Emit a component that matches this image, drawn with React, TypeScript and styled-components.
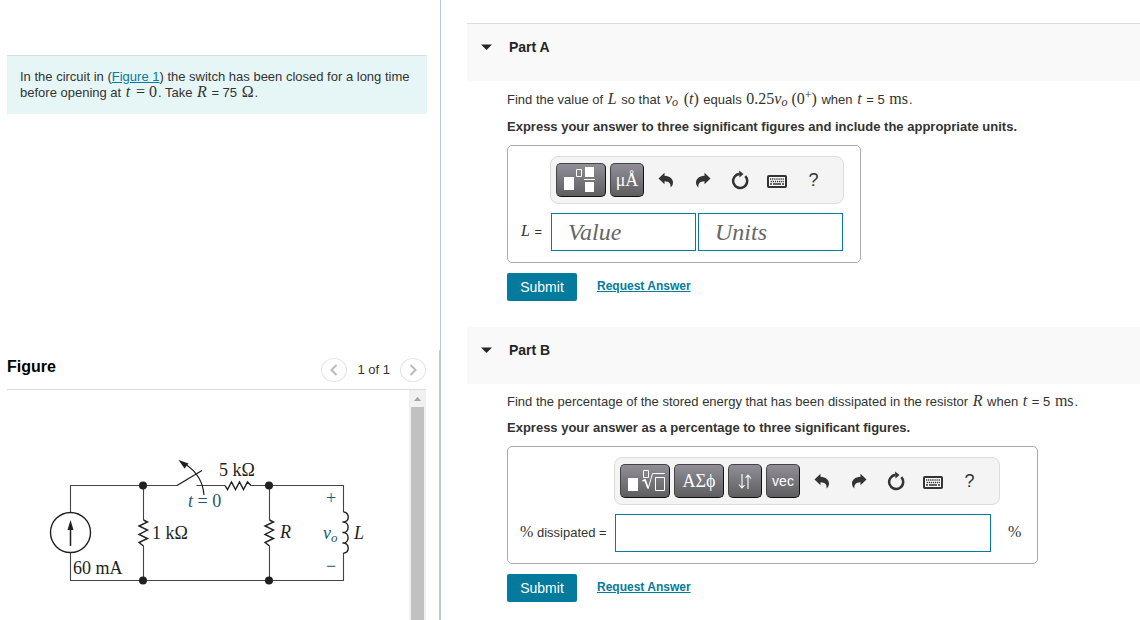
import React from "react";
import styled, { createGlobalStyle, css } from "styled-components";

const sans = '"Liberation Sans", Arial, sans-serif';
const serif = '"Liberation Serif", "Times New Roman", serif';
const teal = "#047a9c";

const GlobalStyle = createGlobalStyle`
  *, *::before, *::after { box-sizing: border-box; }
  body {
    margin: 0;
    background: #fff;
    color: #333;
    font: 13px/16px ${sans};
  }
  button, input { font-family: inherit; }
  h2, h3, p { margin: 0; }
`;

const Page = styled.div`
  display: flex;
  align-items: flex-start;
`;

const Sidebar = styled.aside`
  flex: 0 0 441px;
  height: 100vh;
  display: flex;
  flex-direction: column;
`;

const ProblemPane = styled.section`
  flex: 0 0 350px;
  padding: 55px 13px 0 7px;
  border-right: 1px solid #b9cbdf;
`;

const Intro = styled.div`
  padding: 13px 12px 13px 13px;
  border-top: 1px solid #ddd;
  background: #e6f6f7;
`;

const Link = styled.a`
  color: ${teal};
  text-decoration: underline;
`;

const FigurePane = styled.section`
  flex: 1;
  min-height: 0;
  display: flex;
  flex-direction: column;
  padding: 0 13px 0 7px;
  border-right: 2px solid #b9cbdf;
`;

const FigureHeader = styled.header`
  flex: none;
  height: 40px;
  display: flex;
  align-items: center;
  justify-content: space-between;
  border-bottom: 1px solid #ddd;
`;

const FigureTitle = styled.h2`
  padding-bottom: 6px;
  color: #000;
  font-size: 16px;
  line-height: 20px;
`;

const Pager = styled.nav`
  display: flex;
  align-items: center;
  gap: 10px;
`;

const PagerButton = styled.button`
  display: grid;
  place-items: center;
  width: 26px;
  height: 24px;
  padding: 0;
  border: 1px solid #e4e4e4;
  border-radius: 50%;
  background: #fff;
`;

const PagerText = styled.span`
  padding-top: 1px;
`;

const FigureBody = styled.div`
  flex: 1;
  min-height: 0;
  display: flex;
  overflow: hidden;
`;

const Circuit = styled.svg`
  flex: none;
  display: block;
  text {
    font-family: ${serif};
    font-size: 18px;
    fill: #231f20;
  }
  .it { font-style: italic; }
  .blue { fill: #1c5878; }
  .sub { font-size: 13px; }
`;

const ScrollTrack = styled.div`
  width: 17px;
  margin-left: auto;
  display: flex;
  flex-direction: column;
  align-items: center;
  background: #f1f1f1;
`;

const ScrollArrow = styled.svg`
  flex: none;
  width: 17px;
  height: 17px;
`;

const ScrollThumb = styled.div`
  flex: 1;
  width: 13px;
  background: #c1c1c1;
`;

const Main = styled.main`
  flex: 1;
  min-width: 0;
  padding: 23px 0 0 26px;
`;

const Part = styled.section`
  & + & { margin-top: 26px; }
`;

const PartHeader = styled.header<{ $ruled?: boolean }>`
  display: flex;
  align-items: flex-start;
  gap: 17px;
  padding: 15px 14px 26px;
  background: #f9f9f9;
  ${(p) => p.$ruled && css`border-top: 1px solid #ddd;`}
`;

const Caret = styled.svg`
  width: 11px;
  height: 16px;
`;

const PartTitle = styled.h3`
  color: #252525;
  font-size: 14px;
  line-height: 16px;
`;

const PartBody = styled.div`
  display: flex;
  flex-direction: column;
  align-items: flex-start;
  gap: 10px;
  padding: 10px 20px 0 40px;
`;

const Question = styled.p<{ $tall?: boolean }>`
  line-height: ${(p) => (p.$tall ? 18 : 16)}px;
`;

const Instruction = styled.p`
  font-weight: bold;
`;

const Math = styled.span<{ $upright?: boolean; $tight?: boolean }>`
  margin: 0 ${(p) => (p.$tight ? 0 : 1)}px;
  font-family: ${serif};
  font-size: 16px;
  line-height: 1px;
  font-style: ${(p) => (p.$upright ? "normal" : "italic")};
  sub, sup { font-size: 12px; line-height: 1px; }
  sub { vertical-align: -2px; }
  sup { vertical-align: 5px; }
`;

const AnswerBox = styled.div<{ $label: number }>`
  display: grid;
  grid-template-columns: ${(p) => p.$label}px auto auto;
  row-gap: 9px;
  align-items: center;
  padding: 10px 16px 11px 12px;
  border: 1px solid #aaa;
  border-radius: 5px;
`;

const Toolbar = styled.div`
  grid-column: 2;
  display: flex;
  align-items: center;
  gap: 4px;
  height: 48px;
  padding: 0 11px 0 5px;
  border: 1px solid #dcdcdc;
  border-radius: 8px;
  background: #f4f4f4;
`;

const IconGroup = styled.div`
  display: flex;
  margin-left: -1px;
`;

const DarkButton = styled.button<{ $wide?: boolean; $serif?: boolean }>`
  display: grid;
  place-items: center;
  width: ${(p) => (p.$wide ? 50 : 34)}px;
  height: 34px;
  padding: 0;
  border: 1px solid #111;
  border-top-color: #444;
  border-left-color: #444;
  border-radius: 5px;
  background: linear-gradient(#918e98, #5e5e60);
  color: #fff;
  font-family: ${(p) => (p.$serif ? serif : sans)};
  font-size: ${(p) => (p.$serif ? 18 : 14)}px;
  line-height: 20px;
`;

const IconButton = styled.button`
  display: grid;
  place-items: center;
  width: 37px;
  height: 34px;
  padding: 0;
  border: 0;
  background: none;
  color: #333;
  font-size: 18px;
  line-height: 20px;
`;

const FieldLabel = styled.label`
  grid-column: 1;
  white-space: nowrap;
`;

const Fields = styled.div`
  grid-column: 2;
  display: flex;
  gap: 2px;
  padding-left: 1px;
`;

const Field = styled.input<{ $long?: boolean }>`
  width: ${(p) => (p.$long ? 376 : 145)}px;
  height: 38px;
  padding: 0 16px;
  border: 1px solid ${teal};
  border-radius: 0;
  background: #fff;
  font: 24px ${serif};
  &::placeholder { color: #666; font-style: italic; opacity: 1; }
`;

const Unit = styled.span`
  padding-left: 8px;
`;

const Actions = styled.div`
  display: flex;
  align-items: center;
  gap: 20px;
`;

const Submit = styled.button`
  width: 70px;
  height: 28px;
  padding: 0;
  border: 0;
  border-radius: 2px;
  background: ${teal};
  color: #fff;
  font-size: 14px;
  line-height: 28px;
`;

const RequestLink = styled(Link)`
  padding-bottom: 2px;
  font-size: 12px;
  font-weight: bold;
`;

const Chevron = ({ d }: { d: string }) => (
  <svg width="12" height="14" viewBox="0 0 12 14" fill="none" stroke="#bbb" strokeWidth="2">
    <path d={d} />
  </svg>
);

const arrowPath =
  "M2.5 8.5L8.5 2.8V5.7C14 6 17 9 17 12.3C17 14.800 16 16.500 14.500 17.500C15.200 13.800 13.200 11.400 8.500 11.300V14.200Z";

const HistoryTools = () => (
  <IconGroup>
    <IconButton aria-label="Undo">
      <svg width="20" height="20" viewBox="0 0 20 20" fill="#333"><path d={arrowPath} /></svg>
    </IconButton>
    <IconButton aria-label="Redo">
      <svg width="20" height="20" viewBox="0 0 20 20" fill="#333">
        <path transform="matrix(-1 0 0 1 20 0)" d={arrowPath} />
      </svg>
    </IconButton>
    <IconButton aria-label="Reset">
      <svg width="20" height="20" viewBox="0 0 20 20">
        <path d="M15.300 6.200A7 7 0 1 1 9.500 4" fill="none" stroke="#333" strokeWidth="2.500" />
        <path d="M9 0.500L13.500 4L9.500 7.500Z" fill="#333" />
      </svg>
    </IconButton>
    <IconButton aria-label="Keyboard shortcuts">
      <svg width="20" height="20" viewBox="0 0 20 20">
        <rect x="1" y="6" width="18" height="11" rx="0.800" fill="#fff" stroke="#333" strokeWidth="2" />
        <path d="M3 9H17" stroke="#333" strokeWidth="1.600" strokeDasharray="1.300 0.800" />
        <path d="M3.600 11.500H17" stroke="#333" strokeWidth="1.600" strokeDasharray="1.300 0.800" />
        <path d="M3 14H5M6 14H14M15 14H17" stroke="#333" strokeWidth="1.300" />
      </svg>
    </IconButton>
    <IconButton aria-label="Help">?</IconButton>
  </IconGroup>
);

const CircuitDiagram = () => (
  <Circuit width="402" height="230" viewBox="7 390 402 230" role="img" aria-label="Circuit with current source, switch, resistors and inductor">
    <g fill="none" stroke="#444" strokeWidth="1.100">
      <path d="M70.500 512.500V485.500H177" />
      <path d="M70.500 553V580.500H343.500V553" />
      <path d="M196.500 485.500H225M251 485.500H343.500V512" />
      <path d="M143.500 485.500V520M143.500 546V580.500M269.500 485.500V520M269.500 546V580.500" />
    </g>
    <g fill="none" stroke="#231f20" strokeWidth="1.400">
      <path d="M177 485.500L202 470.500" />
      <path d="M225 485.500l2.500 4 4 -7.500 4 7.500 4 -7.500 4 7.500 4 -7.500 3.500 3.500" />
      <path d="M143.500 520l4 2 -8.500 4 8.500 4 -8.500 4.500 8.500 4 -8.500 4 4.500 3.500" />
      <path d="M269.500 520l4 2 -8.500 4 8.500 4 -8.500 4.500 8.500 4 -8.500 4 4.500 3.500" />
      <path d="M343.500 512C350 512 350 523 342.500 522C350 521 350 533.500 342.500 532.500C350 531.500 350 544 342.500 543C350 542 350 553.500 343.500 553" />
      <path d="M204 495C203 482 196 471 185 464" strokeWidth="1.200" />
      <circle cx="70.500" cy="532.500" r="20" />
      <path d="M70.500 546V527" strokeWidth="1.500" />
    </g>
    <g fill="#231f20">
      <path d="M70.500 520l3 10h-6z" />
      <path d="M178.500 460l10 3.500 -4 5z" />
      <circle cx="143" cy="485.500" r="4" />
      <circle cx="269" cy="485.500" r="4" />
      <circle cx="143" cy="580.500" r="4" />
      <circle cx="269" cy="580.500" r="4" />
    </g>
    <text x="219" y="476">5 kΩ</text>
    <text x="152" y="539">1 kΩ</text>
    <text x="73" y="574">60 mA</text>
    <text x="280" y="538" className="it">R</text>
    <text x="354" y="539" className="it">L</text>
    <text x="188" y="507" className="blue"><tspan className="it">t</tspan> = 0</text>
    <text x="326" y="504" className="blue">+</text>
    <text x="323" y="539" className="blue it">v<tspan className="sub" dy="3">o</tspan></text>
    <text x="326" y="572" className="blue">−</text>
  </Circuit>
);

const PartHeading = ({ title, ruled }: { title: string; ruled?: boolean }) => (
  <PartHeader $ruled={ruled}>
    <Caret viewBox="0 0 11 16"><path d="M0 5.500H11L5.500 11Z" fill="#252525" /></Caret>
    <PartTitle>{title}</PartTitle>
  </PartHeader>
);

const AnswerActions = () => (
  <Actions>
    <Submit type="button">Submit</Submit>
    <RequestLink href="#request">Request Answer</RequestLink>
  </Actions>
);

export default function App() {
  return (
    <>
      <GlobalStyle />
      <Page>
        <Sidebar>
          <ProblemPane>
            <Intro>
              In the circuit in (<Link href="#figure">Figure 1</Link>) the switch has been closed for a long time
              before opening at <Math>t</Math> <Math $upright>= 0</Math>. Take <Math>R</Math> = 75{" "}
              <Math $upright>Ω</Math>.
            </Intro>
          </ProblemPane>
          <FigurePane id="figure">
            <FigureHeader>
              <FigureTitle>Figure</FigureTitle>
              <Pager>
                <PagerButton aria-label="Previous figure"><Chevron d="M8.500 2L3.500 7L8.500 12" /></PagerButton>
                <PagerText>1 of 1</PagerText>
                <PagerButton aria-label="Next figure"><Chevron d="M3.500 2L8.500 7L3.500 12" /></PagerButton>
              </Pager>
            </FigureHeader>
            <FigureBody>
              <CircuitDiagram />
              <ScrollTrack>
                <ScrollArrow viewBox="0 0 17 17"><path d="M5 11L8.500 7L12 11Z" fill="#a3a3a3" /></ScrollArrow>
                <ScrollThumb />
              </ScrollTrack>
            </FigureBody>
          </FigurePane>
        </Sidebar>

        <Main>
          <Part>
            <PartHeading title="Part A" ruled />
            <PartBody>
              <Question $tall>
                Find the value of <Math>L</Math> so that <Math>v<sub>o</sub></Math>{" "}
                <Math $upright>(<i>t</i>)</Math> equals{" "}
                <Math $upright>0.25<i>v<sub>o</sub></i> (0<sup>+</sup>)</Math> when <Math>t</Math> = 5{" "}
                <Math $upright>ms</Math>.
              </Question>
              <Instruction>
                Express your answer to three significant figures and include the appropriate units.
              </Instruction>
              <AnswerBox $label={30}>
                <Toolbar>
                  <DarkButton $wide aria-label="Templates">
                    <svg width="40" height="28" viewBox="0 0 40 28" fill="#fff">
                      <path d="M3 11h10v13H3zM24 1h9v10h-9zM24 16h9v10h-9zM23 13h11v1H23z" />
                      <path d="M15.500 3.500h5v7h-5z" fill="none" stroke="#fff" />
                    </svg>
                  </DarkButton>
                  <DarkButton $serif>μÅ</DarkButton>
                  <HistoryTools />
                </Toolbar>
                <FieldLabel htmlFor="value"><Math>L</Math> =</FieldLabel>
                <Fields>
                  <Field id="value" placeholder="Value" />
                  <Field aria-label="Units" placeholder="Units" />
                </Fields>
              </AnswerBox>
              <AnswerActions />
            </PartBody>
          </Part>

          <Part>
            <PartHeading title="Part B" />
            <PartBody>
              <Question>
                Find the percentage of the stored energy that has been dissipated in the resistor{" "}
                <Math>R</Math> when <Math>t</Math> = 5 <Math $upright>ms</Math>.
              </Question>
              <Instruction>Express your answer as a percentage to three significant figures.</Instruction>
              <AnswerBox $label={94}>
                <Toolbar>
                  <DarkButton $wide aria-label="Templates">
                    <svg width="40" height="28" viewBox="0 0 40 28" fill="none" stroke="#fff">
                      <path d="M3 11h10v13H3z" fill="#fff" stroke="none" />
                      <path d="M18.500 3.500h5v7h-5z" />
                      <path d="M17.500 14l2.500 -1 3 8" strokeWidth="1.800" />
                      <path d="M23 22L27.500 6.500H40" />
                      <path d="M30.500 10.500h9v13h-9z" />
                    </svg>
                  </DarkButton>
                  <DarkButton $wide $serif>ΑΣϕ</DarkButton>
                  <DarkButton aria-label="Arrows">
                    <svg width="14" height="16" viewBox="0 0 14 16" fill="none" stroke="#fff" strokeWidth="1.100">
                      <path d="M4 1V15M1 11.500L4 15L6.500 12M10 16V2M7.500 5L10 2L13 5.500" />
                    </svg>
                  </DarkButton>
                  <DarkButton>vec</DarkButton>
                  <HistoryTools />
                </Toolbar>
                <FieldLabel htmlFor="percent"><Math $upright $tight>%</Math> dissipated =</FieldLabel>
                <Fields>
                  <Field id="percent" $long />
                </Fields>
                <Unit><Math $upright $tight>%</Math></Unit>
              </AnswerBox>
              <AnswerActions />
            </PartBody>
          </Part>
        </Main>
      </Page>
    </>
  );
}
